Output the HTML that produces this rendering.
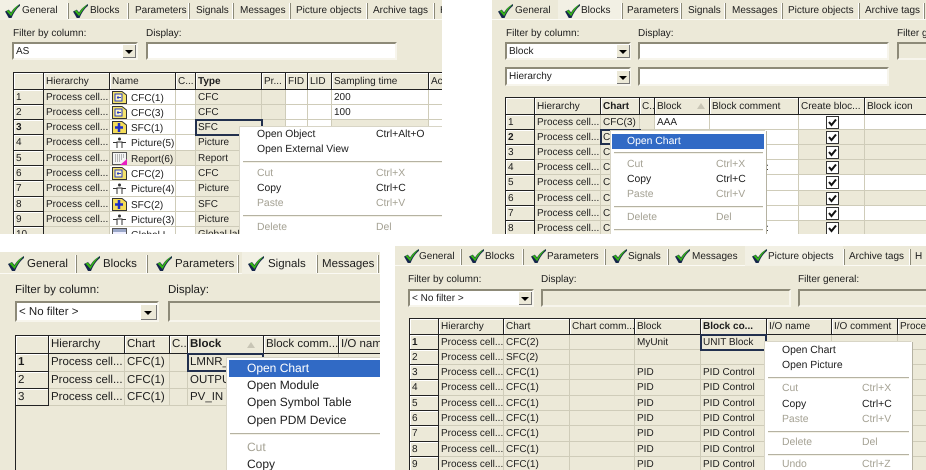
<!DOCTYPE html>
<html><head><meta charset="utf-8"><style>
html,body{margin:0;padding:0;background:#fff}
body{width:926px;height:470px;position:relative;overflow:hidden;font-family:"Liberation Sans",sans-serif;color:#1c1c1c;text-rendering:geometricPrecision}
.p{position:absolute;background:#ece9d8;overflow:hidden;font-size:10px;filter:blur(.3px)}
.s{font-size:11.5px}
.x{position:absolute;white-space:nowrap;line-height:12px}
.n{font-size:10.4px}
.s .n{font-size:12px}
.g{color:#a5a294}
.tl{position:absolute;left:0;right:0;height:1px;background:#fbfaf4}
.at{position:absolute;top:0;background:#f2f0e4}
.sp{position:absolute;width:1px;top:3px;background:#8b8978;box-shadow:-1px 0 #fff}
.ck{position:absolute;width:15px;height:14px}
.s .ck{width:16px;height:15px}
.in{position:absolute;box-sizing:border-box;background:#fff;border:2px solid;border-color:#8d8a78 #f7f5ec #f7f5ec #8d8a78}
.dis{background:#ece9d8}
.bt{position:absolute;box-sizing:border-box;background:#ece9d8;box-shadow:inset 1px 1px #fff,inset -1px -1px #777}
.bt:after{content:"";position:absolute;left:3px;top:6px;border:4px solid transparent;border-top:4px solid #000;border-bottom:0}
.s .bt:after{left:4px;top:7px}
table{position:absolute;border-collapse:separate;border-spacing:0;table-layout:fixed;border-top:1px solid #222;border-left:1px solid #222}
th,td{box-sizing:border-box;padding:0 0 0 2px;overflow:hidden;white-space:nowrap;font-weight:normal;text-align:left;line-height:11px}
th{background:#ece9d8;border-right:1px solid #222;border-bottom:1px solid #222;box-shadow:inset 1px 1px #fff;height:17px}
td{background:#ece9d8;border-right:1px solid #cfccb9;border-bottom:1px solid #cfccb9;height:15px}
td.w{background:#fff}
td.r{border-right:1px solid #222;border-bottom:1px solid #222;box-shadow:inset 1px 1px #fff;padding-left:2px}
tr.t td{height:16px}
.b{font-weight:bold}
.ic{width:15px;height:13px;vertical-align:-3px;margin-right:4px}
.cb{width:13px;height:13px;display:block;margin:0 auto}
.sel{position:absolute;box-sizing:border-box;border:2px solid #22304e}
.m{position:absolute;background:#fff;box-shadow:-1px -1px #d8d5c6,1px 0 #b5b2a2}
.ms{position:absolute;height:1px;background:#b5b2a2;box-shadow:0 1px #f4f2e8}
.hl{position:absolute;background:#316ac5}
.tr{position:absolute;border:4px solid transparent;border-bottom:6px solid #c8c5b5;border-top:0}
</style></head><body>
<svg width="0" height="0" style="position:absolute">
<symbol id="c" viewBox="0 0 16 15"><path d="M0 8L4 6L6.500 9C8.500 5.500 11.500 2.500 16 0L16 2C12 5 9 10 7 15L4 15Z" fill="#16264c"/><path d="M1.500 7.500L4 6.500L6.500 10C8.500 6 11.500 2.500 15.500 .5C12 4 9 8.500 6.500 13Z" fill="#35b516"/></symbol>
<symbol id="cfc" viewBox="0 0 15 13"><path d="M.5.500H10L14.500 4V12.500H.5Z" fill="#f4e36c" stroke="#333"/><path d="M3 3H10V10H3Z" fill="#fff7c0" stroke="#2a3ec0"/><path d="M5 6.500H9M6 5V8" stroke="#2a3ec0"/></symbol>
<symbol id="sfc" viewBox="0 0 15 13"><path d="M.5.500H10L14.500 4V12.500H.5Z" fill="#f4dc58" stroke="#333"/><path d="M7 2V11M3 6.500H11" stroke="#1f2ec8" stroke-width="2.500"/></symbol>
<symbol id="pic" viewBox="0 0 15 13"><circle cx="7.500" cy="3" r="1.500" fill="#333"/><path d="M1 6.500H5M10 6.500H14M5 5.500V12M10 5.500V12M5 6H10" stroke="#333" fill="none"/></symbol>
<symbol id="rep" viewBox="0 0 15 13"><path d="M.5.500H14.500V12.500H.5Z" fill="#f4f4f4" stroke="#555"/><path d="M3 3H12M3 5H12M3 7H10M3 9H8" stroke="#777" stroke-dasharray="1 1"/><path d="M15 7V13H8Z" fill="#e81fc0"/></symbol>
<symbol id="glo" viewBox="0 0 15 13"><path d="M.5.500H14.500V12.500H.5Z" fill="#eef" stroke="#555"/><path d="M1 1H14V4H1Z" fill="#9aa7c8"/></symbol>
<symbol id="b" viewBox="0 0 13 13"><path d="M.5.500H12.500V12.500H.5Z" fill="#fff" stroke="#333"/><path d="M3 6L5.500 9L10 3.500" stroke="#111" stroke-width="2" fill="none"/></symbol>
</svg>

<!-- PANEL 1 -->
<div class="p" style="left:0;top:0;width:442px;height:234px">
<div class="at" style="left:0;width:68px;height:20px"></div><div class="tl" style="top:19px;left:68px"></div>
<svg class="ck" style="left:5px;top:4px"><use href="#c"/></svg><span class="x" style="left:22px;top:5px">General</span><div class="sp" style="left:68px;height:16px"></div>
<svg class="ck" style="left:73px;top:4px"><use href="#c"/></svg><span class="x" style="left:90px;top:5px">Blocks</span><div class="sp" style="left:128px;height:16px"></div>
<span class="x" style="left:135px;top:5px">Parameters</span><div class="sp" style="left:189px;height:16px"></div>
<span class="x" style="left:196px;top:5px">Signals</span><div class="sp" style="left:233px;height:16px"></div>
<span class="x" style="left:240px;top:5px">Messages</span><div class="sp" style="left:290px;height:16px"></div>
<span class="x" style="left:296px;top:5px">Picture objects</span><div class="sp" style="left:367px;height:16px"></div>
<span class="x" style="left:373px;top:5px">Archive tags</span><div class="sp" style="left:434px;height:16px"></div>
<span class="x" style="left:440px;top:5px">H</span>
<span class="x" style="left:13px;top:28px">Filter by column:</span><span class="x" style="left:146px;top:28px">Display:</span>
<div class="in" style="left:12px;top:42px;width:126px;height:18px"></div><span class="x" style="left:16px;top:46px">AS</span><div class="bt" style="left:122px;top:44px;width:14px;height:14px"></div>
<div class="in" style="left:146px;top:42px;width:251px;height:18px"></div>
<table style="left:13px;top:72px;width:440px">
<colgroup><col style="width:30px"><col style="width:66px"><col style="width:66px"><col style="width:20px"><col style="width:66px"><col style="width:24px"><col style="width:22px"><col style="width:24px"><col style="width:97px"><col style="width:25px"></colgroup>
<tr><th><th>Hierarchy<th>Name<th>C...<th class="b">Type<th>Pr...<th>FID<th>LID<th>Sampling time<th>Ac
<tr><td class="r">1<td>Process cell...<td class="w"><svg class="ic"><use href="#cfc"/></svg>CFC(1)<td class="w"><td>CFC<td><td class="w"><td class="w"><td class="w">200<td class="w">
<tr><td class="r">2<td>Process cell...<td class="w"><svg class="ic"><use href="#cfc"/></svg>CFC(3)<td class="w"><td>CFC<td><td class="w"><td class="w"><td class="w">100<td class="w">
<tr><td class="r b">3<td>Process cell...<td class="w"><svg class="ic"><use href="#sfc"/></svg>SFC(1)<td class="w"><td>SFC<td><td class="w"><td class="w"><td><td class="w">
<tr class="t"><td class="r">4<td>Process cell...<td class="w"><svg class="ic"><use href="#pic"/></svg>Picture(5)<td class="w"><td>Picture<td><td class="w"><td class="w"><td><td>
<tr><td class="r">5<td>Process cell...<td><svg class="ic"><use href="#rep"/></svg>Report(6)<td><td>Report<td><td><td><td><td>
<tr><td class="r">6<td>Process cell...<td class="w"><svg class="ic"><use href="#cfc"/></svg>CFC(2)<td class="w"><td>CFC<td><td><td><td><td>
<tr class="t"><td class="r">7<td>Process cell...<td class="w"><svg class="ic"><use href="#pic"/></svg>Picture(4)<td class="w"><td>Picture<td><td><td><td><td>
<tr><td class="r">8<td>Process cell...<td class="w"><svg class="ic"><use href="#sfc"/></svg>SFC(2)<td class="w"><td>SFC<td><td><td><td><td>
<tr><td class="r">9<td>Process cell...<td class="w"><svg class="ic"><use href="#pic"/></svg>Picture(3)<td class="w"><td>Picture<td><td><td><td><td>
<tr><td class="r">10<td><td class="w"><svg class="ic"><use href="#glo"/></svg>Global I<td class="w"><td>Global lal<td><td><td><td><td>
</table>
<div class="sel" style="left:195px;top:119px;width:68px;height:17px"></div>
<div class="m" style="left:240px;top:127px;width:210px;height:120px"></div>
<span class="x n" style="left:257px;top:129px">Open Object</span><span class="x n" style="left:376px;top:129px">Ctrl+Alt+O</span>
<span class="x n" style="left:257px;top:144px">Open External View</span>
<div class="ms" style="left:243px;top:161px;width:199px"></div>
<span class="x n g" style="left:257px;top:168px">Cut</span><span class="x n g" style="left:376px;top:168px">Ctrl+X</span>
<span class="x n" style="left:257px;top:183px">Copy</span><span class="x n" style="left:376px;top:183px">Ctrl+C</span>
<span class="x n g" style="left:257px;top:198px">Paste</span><span class="x n g" style="left:376px;top:198px">Ctrl+V</span>
<div class="ms" style="left:243px;top:215px;width:199px"></div>
<span class="x n g" style="left:257px;top:222px">Delete</span><span class="x n g" style="left:376px;top:222px">Del</span>
</div>

<!-- PANEL 2 -->
<div class="p" style="left:492px;top:0;width:434px;height:234px">
<div class="at" style="left:66px;width:64px;height:20px"></div><div class="tl" style="top:19px"></div>
<svg class="ck" style="left:6px;top:4px"><use href="#c"/></svg><span class="x" style="left:23px;top:5px">General</span>
<svg class="ck" style="left:73px;top:4px"><use href="#c"/></svg><span class="x" style="left:89px;top:5px">Blocks</span><div class="sp" style="left:130px;height:16px"></div>
<span class="x" style="left:135px;top:5px">Parameters</span><div class="sp" style="left:189px;height:16px"></div>
<span class="x" style="left:196px;top:5px">Signals</span><div class="sp" style="left:233px;height:16px"></div>
<span class="x" style="left:240px;top:5px">Messages</span><div class="sp" style="left:290px;height:16px"></div>
<span class="x" style="left:296px;top:5px">Picture objects</span><div class="sp" style="left:367px;height:16px"></div>
<span class="x" style="left:373px;top:5px">Archive tags</span><div class="sp" style="left:432px;height:16px"></div>
<span class="x" style="left:14px;top:28px">Filter by column:</span><span class="x" style="left:146px;top:28px">Display:</span><span class="x" style="left:405px;top:28px">Filter general:</span>
<div class="in" style="left:13px;top:42px;width:126px;height:18px"></div><span class="x" style="left:17px;top:46px">Block</span><div class="bt" style="left:124px;top:44px;width:14px;height:14px"></div>
<div class="in" style="left:146px;top:42px;width:251px;height:18px"></div>
<div class="in dis" style="left:405px;top:42px;width:40px;height:18px"></div>
<div class="in" style="left:13px;top:67px;width:126px;height:19px"></div><span class="x" style="left:17px;top:71px">Hierarchy</span><div class="bt" style="left:124px;top:70px;width:14px;height:14px"></div>
<div class="in" style="left:146px;top:67px;width:251px;height:19px"></div>
<table style="left:13px;top:97px;width:440px">
<colgroup><col style="width:29px"><col style="width:66px"><col style="width:39px"><col style="width:15px"><col style="width:55px"><col style="width:89px"><col style="width:66px"><col style="width:81px"></colgroup>
<tr><th><th>Hierarchy<th class="b">Chart<th>C..<th>Block<th>Block comment<th>Create bloc...<th>Block icon
<tr><td class="r">1<td>Process cell...<td>CFC(3)<td><td class="w">AAA<td class="w"><td class="w"><svg class="cb"><use href="#b"/></svg><td class="w">
<tr><td class="r b">2<td>Process cell...<td>C<td><td class="w"><td class="w"><td><svg class="cb"><use href="#b"/></svg><td>
<tr><td class="r">3<td>Process cell...<td>C<td><td class="w"><td class="w"><td><svg class="cb"><use href="#b"/></svg><td>
<tr><td class="r">4<td>Process cell...<td>C<td><td class="w"><td class="w" style="padding-left:56px">:<td><svg class="cb"><use href="#b"/></svg><td>
<tr class="t"><td class="r">5<td>Process cell...<td>C<td><td class="w"><td class="w"><td class="w"><svg class="cb"><use href="#b"/></svg><td class="w">
<tr><td class="r">6<td>Process cell...<td>C<td><td class="w"><td class="w" style="padding-left:48px">ut<td><svg class="cb"><use href="#b"/></svg><td>
<tr><td class="r">7<td>Process cell...<td>C<td><td class="w"><td class="w"><td class="w"><svg class="cb"><use href="#b"/></svg><td class="w">
<tr><td class="r">8<td>Process cell...<td>C<td><td class="w"><td class="w" style="padding-left:56px">:<td><svg class="cb"><use href="#b"/></svg><td>
</table>
<div class="tr" style="left:205px;top:103px"></div>
<div class="sel" style="left:108px;top:129px;width:41px;height:16px"></div>
<div class="m" style="left:119px;top:131px;width:155px;height:120px"></div>
<div class="hl" style="left:120px;top:134px;width:152px;height:15px"></div>
<span class="x n" style="left:135px;top:136px;color:#fff">Open Chart</span>
<div class="ms" style="left:122px;top:152px;width:149px"></div>
<span class="x n g" style="left:135px;top:159px">Cut</span><span class="x n g" style="left:224px;top:159px">Ctrl+X</span>
<span class="x n" style="left:135px;top:174px">Copy</span><span class="x n" style="left:224px;top:174px">Ctrl+C</span>
<span class="x n g" style="left:135px;top:189px">Paste</span><span class="x n g" style="left:224px;top:189px">Ctrl+V</span>
<div class="ms" style="left:122px;top:206px;width:149px"></div>
<span class="x n g" style="left:135px;top:212px">Delete</span><span class="x n g" style="left:224px;top:212px">Del</span>
<div class="ms" style="left:122px;top:229px;width:149px"></div>
</div>

<!-- PANEL 3 -->
<div class="p s" style="left:0;top:252px;width:380px;height:218px">
<div class="tl" style="top:21px"></div>
<div class="at" style="left:242px;width:75px;height:22px"></div>
<svg class="ck" style="left:8px;top:4px"><use href="#c"/></svg><span class="x" style="left:27px;top:6px">General</span><div class="sp" style="left:76px;height:18px"></div>
<svg class="ck" style="left:84px;top:4px"><use href="#c"/></svg><span class="x" style="left:103px;top:6px">Blocks</span><div class="sp" style="left:147px;height:18px"></div>
<svg class="ck" style="left:156px;top:4px"><use href="#c"/></svg><span class="x" style="left:175px;top:6px">Parameters</span><div class="sp" style="left:238px;height:18px"></div>
<svg class="ck" style="left:248px;top:4px"><use href="#c"/></svg><span class="x" style="left:268px;top:6px">Signals</span><div class="sp" style="left:317px;height:18px"></div>
<span class="x" style="left:322px;top:6px">Messages</span><div class="sp" style="left:378px;height:18px"></div>
<span class="x" style="left:15px;top:32px">Filter by column:</span><span class="x" style="left:168px;top:32px">Display:</span>
<div class="in" style="left:15px;top:49px;width:144px;height:21px"></div><span class="x" style="left:19px;top:54px">&lt; No filter &gt;</span><div class="bt" style="left:140px;top:52px;width:17px;height:16px"></div>
<div class="in dis" style="left:168px;top:49px;width:240px;height:21px"></div>
<table style="left:15px;top:83px;width:400px">
<colgroup><col style="width:33px"><col style="width:76px"><col style="width:45px"><col style="width:18px"><col style="width:76px"><col style="width:75px"><col style="width:77px"></colgroup>
<tr style="height:18px"><th style="height:18px"><th style="height:18px">Hierarchy<th style="height:18px">Chart<th style="height:18px">C..<th class="b" style="height:18px">Block<th style="height:18px">Block comm...<th style="height:18px">I/O name
<tr><td class="r b" style="height:18px">1<td style="height:18px">Process cell...<td style="height:18px">CFC(1)<td style="height:18px"><td style="height:18px">LMNR_<td style="height:18px"><td style="height:18px">
<tr><td class="r" style="height:17px">2<td style="height:17px">Process cell...<td style="height:17px">CFC(1)<td style="height:17px"><td style="height:17px">OUTPUT<td style="height:17px"><td style="height:17px">
<tr><td class="r" style="height:17px">3<td style="height:17px">Process cell...<td style="height:17px">CFC(1)<td style="height:17px"><td style="height:17px">PV_IN<td style="height:17px"><td style="height:17px">
</table>
<div style="position:absolute;left:15px;top:153px;width:1px;height:70px;background:#222"></div>
<div class="tr" style="left:247px;top:90px"></div>
<div class="sel" style="left:187px;top:101px;width:77px;height:19px"></div>
<div class="m" style="left:227px;top:106px;width:170px;height:120px"></div>
<div class="hl" style="left:229px;top:108px;width:160px;height:17px"></div>
<span class="x n" style="left:247px;top:110px;color:#fff">Open Chart</span>
<span class="x n" style="left:247px;top:127px">Open Module</span>
<span class="x n" style="left:247px;top:144px">Open Symbol Table</span>
<span class="x n" style="left:247px;top:162px">Open PDM Device</span>
<div class="ms" style="left:230px;top:181px;width:150px"></div>
<span class="x n g" style="left:247px;top:189px">Cut</span>
<span class="x n" style="left:247px;top:206px">Copy</span>
</div>

<!-- PANEL 4 -->
<div class="p" style="left:395px;top:246px;width:531px;height:224px">
<div class="tl" style="top:19px"></div>
<div class="at" style="left:350px;width:98px;height:20px"></div>
<svg class="ck" style="left:9px;top:3px"><use href="#c"/></svg><span class="x" style="left:24px;top:5px">General</span><div class="sp" style="left:66px;height:16px"></div>
<svg class="ck" style="left:74px;top:3px"><use href="#c"/></svg><span class="x" style="left:90px;top:5px">Blocks</span><div class="sp" style="left:128px;height:16px"></div>
<svg class="ck" style="left:136px;top:3px"><use href="#c"/></svg><span class="x" style="left:152px;top:5px">Parameters</span><div class="sp" style="left:210px;height:16px"></div>
<svg class="ck" style="left:217px;top:3px"><use href="#c"/></svg><span class="x" style="left:233px;top:5px">Signals</span><div class="sp" style="left:273px;height:16px"></div>
<svg class="ck" style="left:280px;top:3px"><use href="#c"/></svg><span class="x" style="left:297px;top:5px">Messages</span>
<svg class="ck" style="left:357px;top:3px"><use href="#c"/></svg><span class="x" style="left:373px;top:5px">Picture objects</span><div class="sp" style="left:449px;height:16px"></div>
<span class="x" style="left:454px;top:5px">Archive tags</span><div class="sp" style="left:515px;height:16px"></div>
<span class="x" style="left:520px;top:5px">H</span>
<span class="x" style="left:13px;top:28px">Filter by column:</span><span class="x" style="left:146px;top:28px">Display:</span><span class="x" style="left:403px;top:28px">Filter general:</span>
<div class="in" style="left:13px;top:43px;width:126px;height:18px"></div><span class="x" style="left:17px;top:47px">&lt; No filter &gt;</span><div class="bt" style="left:123px;top:45px;width:14px;height:14px"></div>
<div class="in dis" style="left:146px;top:43px;width:250px;height:18px"></div>
<div class="in dis" style="left:403px;top:43px;width:140px;height:18px"></div>
<table style="left:14px;top:72px;width:540px">
<colgroup><col style="width:29px"><col style="width:65px"><col style="width:66px"><col style="width:65px"><col style="width:66px"><col style="width:66px"><col style="width:65px"><col style="width:66px"><col style="width:51px"></colgroup>
<tr><th style="height:16px"><th style="height:16px">Hierarchy<th style="height:16px">Chart<th style="height:16px">Chart comm...<th style="height:16px">Block<th class="b" style="height:16px">Block co...<th style="height:16px">I/O name<th style="height:16px">I/O comment<th style="height:16px">Process
<tr><td class="r b">1<td>Process cell...<td>CFC(2)<td><td>MyUnit<td>UNIT Block<td><td><td>
<tr><td class="r">2<td>Process cell...<td>SFC(2)<td><td><td><td><td><td>
<tr><td class="r">3<td>Process cell...<td>CFC(1)<td><td>PID<td>PID Control<td><td><td>
<tr class="t"><td class="r">4<td>Process cell...<td>CFC(1)<td><td>PID<td>PID Control<td><td><td>
<tr><td class="r">5<td>Process cell...<td>CFC(1)<td><td>PID<td>PID Control<td><td><td>
<tr><td class="r">6<td>Process cell...<td>CFC(1)<td><td>PID<td>PID Control<td><td><td>
<tr class="t"><td class="r">7<td>Process cell...<td>CFC(1)<td><td>PID<td>PID Control<td><td><td>
<tr><td class="r">8<td>Process cell...<td>CFC(1)<td><td>PID<td>PID Control<td><td><td>
<tr><td class="r">9<td>Process cell...<td>CFC(1)<td><td>PID<td>PID Control<td><td><td>
</table>
<div class="sel" style="left:305px;top:88px;width:67px;height:17px"></div>
<div class="m" style="left:370px;top:96px;width:147px;height:140px"></div>
<span class="x n" style="left:387px;top:99px">Open Chart</span>
<span class="x n" style="left:387px;top:114px">Open Picture</span>
<div class="ms" style="left:373px;top:131px;width:141px"></div>
<span class="x n g" style="left:387px;top:137px">Cut</span><span class="x n g" style="left:467px;top:137px">Ctrl+X</span>
<span class="x n" style="left:387px;top:153px">Copy</span><span class="x n" style="left:467px;top:153px">Ctrl+C</span>
<span class="x n g" style="left:387px;top:168px">Paste</span><span class="x n g" style="left:467px;top:168px">Ctrl+V</span>
<div class="ms" style="left:373px;top:185px;width:141px"></div>
<span class="x n g" style="left:387px;top:191px">Delete</span><span class="x n g" style="left:467px;top:191px">Del</span>
<div class="ms" style="left:373px;top:208px;width:141px"></div>
<span class="x n g" style="left:387px;top:213px">Undo</span><span class="x n g" style="left:467px;top:213px">Ctrl+Z</span>
</div>
</body></html>
